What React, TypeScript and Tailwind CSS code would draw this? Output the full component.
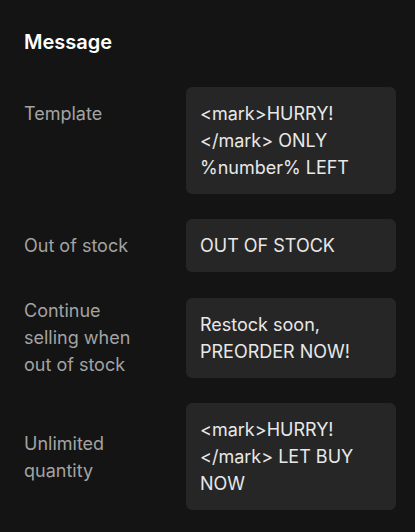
import React from "react";

const rows: { label: string; value: string[]; align: "start" | "center" }[] = [
  { label: "Template", value: ["<mark>HURRY!", "</mark> ONLY", "%number% LEFT"], align: "start" },
  { label: "Out of stock", value: ["OUT OF STOCK"], align: "center" },
  { label: "Continue selling when out of stock", value: ["Restock soon,", "PREORDER NOW!"], align: "center" },
  { label: "Unlimited quantity", value: ["<mark>HURRY!", "</mark> LET BUY", "NOW"], align: "center" },
];

export default function App() {
  return (
    <div
      className="min-h-[532px] w-[415px] bg-[#141414] pl-6 pr-[19px] pt-[29px]"
      style={{ fontFamily: "Inter, 'Noto Sans', sans-serif" }}
    >
      <h2 className="text-[20px] font-semibold leading-[26px] text-white">Message</h2>
      <div className="mt-[32px] flex flex-col gap-[25px]">
        {rows.map((r) => (
          <div
            key={r.label}
            className={`flex justify-between ${r.align === "start" ? "items-start" : "items-center"}`}
          >
            <div
              className={`w-[125px] text-[18px] leading-[27px] text-[#a3a3a3] ${r.align === "start" ? "pt-[13px]" : ""}`}
            >
              {r.label}
            </div>
            <div className="w-[210px] rounded-[6px] bg-[#262626] px-[14px] py-[13px] text-[18px] leading-[27px] text-[#e8e8e8]">
              {r.value.map((l, i) => (
                <div key={i}>{l}</div>
              ))}
            </div>
          </div>
        ))}
      </div>
    </div>
  );
}
